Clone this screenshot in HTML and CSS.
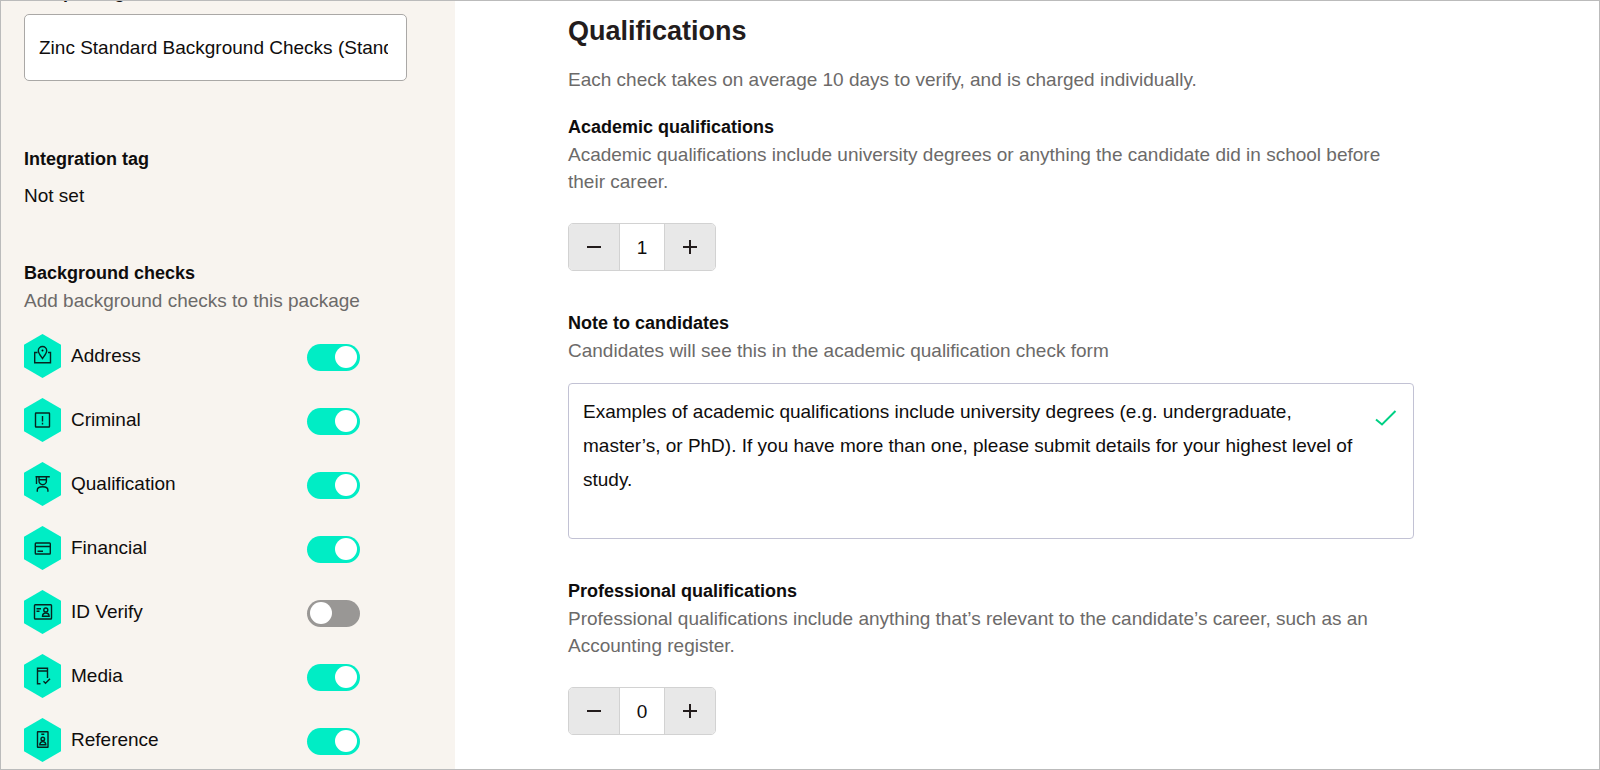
FILE: index.html
```html
<!DOCTYPE html>
<html lang="en">
<head>
<meta charset="utf-8">
<title>Package settings</title>
<link rel="stylesheet" href="styles.css">
</head>
<body>
<div class="app">
  <aside class="sidebar">
    <label class="heading package-label" for="package">Edit package</label>
    <input class="package-input" id="package" type="text" value="Zinc Standard Background Checks (Standard)">

    <section class="tag">
      <h2 class="heading">Integration tag</h2>
      <p class="tag-value">Not set</p>
    </section>

    <section class="checks">
      <h2 class="heading">Background checks</h2>
      <p class="hint">Add background checks to this package</p>
      <ul class="check-list">
        <li class="check">
          <svg class="hex" viewBox="0 0 37 44" aria-hidden="true"><path class="hex-fill" d="M18.500 0 37 10.700V33.300L18.500 44 0 33.300V10.700Z"/><path class="line" d="M13.500 18.500H10.700V28.700H26.500V18.500H24M18.500 24.500C16 21 14.300 19 14.300 16.700a4.200 4.200 0 0 1 8.400 0C22.700 19 21 21 18.500 24.500Z"/><circle cx="18.500" cy="16.500" r="1"/></svg>
          <label class="check-name" for="address">Address</label>
          <input class="toggle" id="address" type="checkbox" checked>
        </li>
        <li class="check">
          <svg class="hex" viewBox="0 0 37 44" aria-hidden="true"><path class="hex-fill" d="M18.500 0 37 10.700V33.300L18.500 44 0 33.300V10.700Z"/><rect class="line" x="11.500" y="15" width="14" height="14" rx=".5"/><path class="line" d="M18.500 18v5.500M18.500 24.700v1.700"/></svg>
          <label class="check-name" for="criminal">Criminal</label>
          <input class="toggle" id="criminal" type="checkbox" checked>
        </li>
        <li class="check">
          <svg class="hex" viewBox="0 0 37 44" aria-hidden="true"><path class="hex-fill" d="M18.500 0 37 10.700V33.300L18.500 44 0 33.300V10.700Z"/><path class="line" d="M11.500 14.700H25.800M12.500 14.700V22M15 14.700V19a3.700 3.700 0 0 0 7.400 0V14.700M15 17.700H22.400M13.300 29.700V28c0-2 2-3.200 5.300-3.200s5.300 1.200 5.300 3.200v1.700"/></svg>
          <label class="check-name" for="qualification">Qualification</label>
          <input class="toggle" id="qualification" type="checkbox" checked>
        </li>
        <li class="check">
          <svg class="hex" viewBox="0 0 37 44" aria-hidden="true"><path class="hex-fill" d="M18.500 0 37 10.700V33.300L18.500 44 0 33.300V10.700Z"/><rect class="line" x="11.300" y="17" width="15" height="11" rx=".8"/><path class="line" d="M11.300 20.500H26.300M13.500 25.300H19"/></svg>
          <label class="check-name" for="financial">Financial</label>
          <input class="toggle" id="financial" type="checkbox" checked>
        </li>
        <li class="check">
          <svg class="hex" viewBox="0 0 37 44" aria-hidden="true"><path class="hex-fill" d="M18.500 0 37 10.700V33.300L18.500 44 0 33.300V10.700Z"/><rect class="line" x="10.500" y="14.700" width="17" height="14.300" rx=".8"/><path class="line" d="M12.500 18.800H17M12.500 21.300H15.500M18.500 26.300c0-2.200 1-3.300 3.300-3.300s3.300 1.100 3.300 3.300Z"/><circle class="line" cx="21.800" cy="20" r="2"/></svg>
          <label class="check-name" for="id-verify">ID Verify</label>
          <input class="toggle" id="id-verify" type="checkbox">
        </li>
        <li class="check">
          <svg class="hex" viewBox="0 0 37 44" aria-hidden="true"><path class="hex-fill" d="M18.500 0 37 10.700V33.300L18.500 44 0 33.300V10.700Z"/><path class="line" d="M16.500 29.700H13.500V14.200H23.500V24M13.500 17H23.500M19.500 27.300l2 2 4.500-4.500"/></svg>
          <label class="check-name" for="media">Media</label>
          <input class="toggle" id="media" type="checkbox" checked>
        </li>
        <li class="check">
          <svg class="hex" viewBox="0 0 37 44" aria-hidden="true"><path class="hex-fill" d="M18.500 0 37 10.700V33.300L18.500 44 0 33.300V10.700Z"/><rect class="line" x="13.500" y="13.700" width="10.500" height="15.500" rx=".3"/><path class="line" d="M17.300 16.200h3M15.800 26.800c0-2.200 1-3.200 3-3.200s3 1 3 3.200Z"/><circle class="line" cx="18.800" cy="21" r="1.800"/></svg>
          <label class="check-name" for="reference">Reference</label>
          <input class="toggle" id="reference" type="checkbox" checked>
        </li>
      </ul>
    </section>
  </aside>

  <main class="content">
    <h1 class="title">Qualifications</h1>
    <p class="intro">Each check takes on average 10 days to verify, and is charged individually.</p>

    <section class="block">
      <h2 class="heading">Academic qualifications</h2>
      <p class="hint">Academic qualifications include university degrees or anything the candidate did in school before their career.</p>
      <div class="stepper">
        <button class="step" type="button" aria-label="Fewer academic qualifications"><svg class="sign" viewBox="0 0 16 16" aria-hidden="true"><path d="M1 8H15"/></svg></button>
        <input class="count" type="text" value="1" aria-label="Academic qualifications">
        <button class="step" type="button" aria-label="More academic qualifications"><svg class="sign" viewBox="0 0 16 16" aria-hidden="true"><path d="M1 8H15M8 1V15"/></svg></button>
      </div>
    </section>

    <section class="block">
      <label class="heading" for="note">Note to candidates</label>
      <p class="hint">Candidates will see this in the academic qualification check form</p>
      <div class="note">
        <textarea class="note-text" id="note">Examples of academic qualifications include university degrees (e.g. undergraduate, master’s, or PhD). If you have more than one, please submit details for your highest level of study.</textarea>
        <svg class="tick" viewBox="0 0 22 16" aria-hidden="true"><path d="M1 9.500 7 14.500 20.500 1"/></svg>
      </div>
    </section>

    <section class="block">
      <h2 class="heading">Professional qualifications</h2>
      <p class="hint">Professional qualifications include anything that’s relevant to the candidate’s career, such as an Accounting register.</p>
      <div class="stepper">
        <button class="step" type="button" aria-label="Fewer professional qualifications"><svg class="sign" viewBox="0 0 16 16" aria-hidden="true"><path d="M1 8H15"/></svg></button>
        <input class="count" type="text" value="0" aria-label="Professional qualifications">
        <button class="step" type="button" aria-label="More professional qualifications"><svg class="sign" viewBox="0 0 16 16" aria-hidden="true"><path d="M1 8H15M8 1V15"/></svg></button>
      </div>
    </section>
  </main>
</div>
</body>
</html>
```

FILE: styles.css
```css
* {
  box-sizing: border-box;
}

body {
  margin: 0;
  color: #0f0d0d;
  background: #fff;
  font: 19px/27px "Liberation Sans", Arial, sans-serif;
}

input,
textarea,
button {
  font: inherit;
  color: inherit;
}

h1,
h2,
p,
ul {
  margin: 0;
  padding: 0;
}

.app {
  display: flex;
  height: 100vh;
  overflow: hidden;
  border: 1px solid #bbb;
}

.sidebar {
  flex: 0 0 454px;
  padding: 0 48px 0 23px;
  overflow: hidden;
  background: #f8f4ef;
}

.heading {
  display: block;
  font-size: 18px;
  font-weight: 700;
  line-height: 28px;
}

.hint {
  color: #6c6a69;
}

.package-label {
  margin-top: -23px;
}

.package-input {
  display: block;
  width: 100%;
  height: 67px;
  margin-top: 8px;
  padding: 0 18px 0 14px;
  border: 1px solid #aaa8a6;
  border-radius: 5px;
  background: #fff;
}

.tag {
  margin-top: 64px;
}

.tag-value {
  margin-top: 9px;
}

.checks {
  margin-top: 50px;
}

.check-list {
  margin-top: 20px;
  list-style: none;
}

.check {
  display: flex;
  align-items: center;
  height: 44px;
  margin-bottom: 20px;
}

.hex {
  width: 37px;
  height: 44px;
}

.hex-fill {
  fill: #00edc5;
}

.line {
  fill: none;
  stroke: #06241f;
  stroke-width: 1.4;
}

.check-name {
  flex: 1;
  margin-left: 10px;
  padding-bottom: 2px;
}

.toggle {
  appearance: none;
  display: flex;
  justify-content: flex-start;
  width: 53px;
  height: 27px;
  margin: 3px 47px 0 0;
  padding: 2px 3px;
  border-radius: 14px;
  background: #999795;
}

.toggle::before {
  content: "";
  width: 22px;
  height: 22px;
  border-radius: 50%;
  background: #fff;
}

.toggle:checked {
  justify-content: flex-end;
  background: #00edc5;
}

.content {
  flex: 1;
  max-width: 959px;
  padding: 13px 0 0 113px;
}

.title {
  color: #231c1c;
  font-size: 27px;
  line-height: 34px;
}

.intro {
  margin: 18px 0 20px;
  color: #6c6a69;
}

.block {
  margin-bottom: 38px;
}

.stepper {
  display: flex;
  width: 148px;
  height: 48px;
  margin-top: 28px;
  overflow: hidden;
  border: 1px solid #d2d2d2;
  border-radius: 5px;
}

.step {
  display: grid;
  flex: 0 0 50px;
  place-items: center;
  padding: 0;
  border: 0;
  background: #e8e8e8;
}

.sign {
  width: 16px;
  height: 16px;
  fill: none;
  stroke: #231c1c;
  stroke-width: 2;
}

.count {
  flex: 1;
  min-width: 0;
  padding: 0;
  border: solid #d2d2d2;
  border-width: 0 1px;
  text-align: center;
}

.note {
  position: relative;
  margin-top: 19px;
}

.note-text {
  display: block;
  width: 100%;
  height: 156px;
  padding: 11px 48px 11px 14px;
  border: 1px solid #c2c2d4;
  border-radius: 4px;
  line-height: 34px;
  resize: none;
}

.tick {
  position: absolute;
  top: 27px;
  right: 17px;
  width: 22px;
  height: 16px;
  fill: none;
  stroke: #00d084;
  stroke-width: 2;
}
```
